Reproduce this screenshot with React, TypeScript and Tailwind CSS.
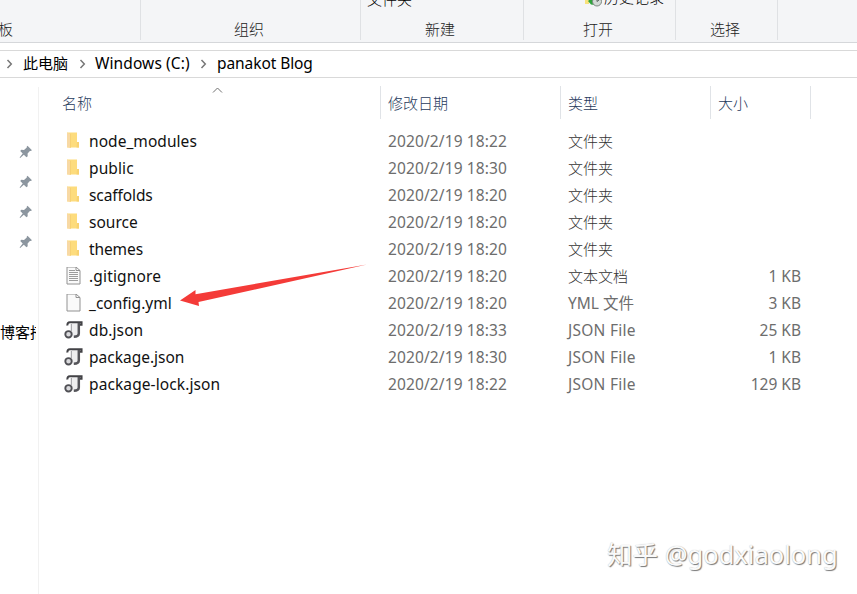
import React from 'react'

type FileKind = 'folder' | 'text' | 'blank' | 'script'

type Entry = {
    name: string
    kind: FileKind
    date: string
    type: string
    size?: string
    // letter-spacing class for labels that need a nudge
    tracking?: string
}

const ENTRIES: Entry[] = [
    { name: 'node_modules', kind: 'folder', date: '2020/2/19 18:22', type: '文件夹', tracking: 'tracking-[0.05px]' },
    { name: 'public', kind: 'folder', date: '2020/2/19 18:30', type: '文件夹', tracking: 'tracking-[0.1px]' },
    { name: 'scaffolds', kind: 'folder', date: '2020/2/19 18:20', type: '文件夹', tracking: 'tracking-[-0.1px]' },
    { name: 'source', kind: 'folder', date: '2020/2/19 18:20', type: '文件夹' },
    { name: 'themes', kind: 'folder', date: '2020/2/19 18:20', type: '文件夹', tracking: 'tracking-[-0.1px]' },
    { name: '.gitignore', kind: 'text', date: '2020/2/19 18:20', type: '文本文档', size: '1 KB', tracking: 'tracking-[0.15px]' },
    { name: '_config.yml', kind: 'blank', date: '2020/2/19 18:20', type: 'YML 文件', size: '3 KB' },
    { name: 'db.json', kind: 'script', date: '2020/2/19 18:33', type: 'JSON File', size: '25 KB', tracking: 'tracking-[0.1px]' },
    { name: 'package.json', kind: 'script', date: '2020/2/19 18:30', type: 'JSON File', size: '1 KB' },
    { name: 'package-lock.json', kind: 'script', date: '2020/2/19 18:22', type: 'JSON File', size: '129 KB', tracking: 'tracking-[0.1px]' },
]

// Column text: plain Chinese labels are set lighter than Latin ones
function typeClass(type: string) {
    if (type.startsWith('JSON')) return 'tracking-[0.25px]'
    if (type.startsWith('YML')) return ''
    return 'text-[15px] font-light text-[#333]'
}

function FileIcon({ kind }: { kind: FileKind }) {
    if (kind === 'folder') {
        return (
            <svg className="w-5 h-5" viewBox="0 0 20 20">
                <path d="M3 .5h10V10h2v5.500H3z" fill="#fddc7d" />
                <path d="M3 .5l3 1.500v14L3 15z" fill="#f8d9a4" />
                <path d="M6 2l1-.5v14l-1 .5z" fill="#f7d173" />
                <path d="M13 10h2v5.500h-2.500z" fill="#f8d271" />
            </svg>
        )
    }
    if (kind === 'script') {
        return (
            <svg className="w-5 h-5" viewBox="0 0 20 20" fill="none">
                <path d="M7.500 2h7.500v10.500q0 3-3 3.300H8z" fill="#eeeeef" />
                <path d="M3.500 4.500Q3 1.300 6 1.300h11.500v2.400h-2" stroke="#424246" strokeWidth="2.100" />
                <path d="M14.800 2v10.500q0 3.200-5 3.200" stroke="#55555a" strokeWidth="2.500" />
                <path d="M7.300 3v7" stroke="#97979c" />
                <circle cx="4.500" cy="13.300" r="3.200" fill="#dadadd" stroke="#505055" strokeWidth="1.900" />
            </svg>
        )
    }
    return (
        <svg className="w-5 h-5" viewBox="0 0 20 20" fill="none">
            <path d="M3.500-.500h9L16.500 3v13.500h-13z" fill="#fafafa" stroke="#929292" transform="translate(-.5 .5)" />
            <path d="M12 0v3.500h4" stroke="#929292" />
            {kind === 'text' && (
                <path d="M5 3.500h6M5 5.500h9M5 7.500h9M5 9.500h9M5 11.500h9M5 13.500h9" stroke="#9c9c9c" />
            )}
        </svg>
    )
}

function Pin() {
    return (
        <svg className="w-[14px] h-[14px]" viewBox="0 0 14 14">
            <path d="M8.500 0.800 13 5.200l-1.400.9-.7-.1-2.300 2.600.1 2.700-1.200 1L4.800 9.700 1.200 12.900.6 12.400 3.700 8.600 1.200 6l1.100-1.200 2.700.1L7.800 2.600l-.1-.9z" fill="#8c969f" />
        </svg>
    )
}

function Crumb() {
    return (
        <svg className="w-[7px] h-[10px] shrink-0" viewBox="0 0 7 10" fill="none">
            <path d="M1.500 1l3.800 4-3.800 4" stroke="#777" strokeWidth="1.500" />
        </svg>
    )
}

function HistoryIcon() {
    return (
        <svg className="w-[17px] h-[17px]" viewBox="0 0 17 17">
            <path d="M0 0h4v14H0z" fill="#f8e27c" />
            <path d="M3 11l5-4 2 8-4-.5z" fill="#2fa43c" />
            <circle cx="12" cy="11.500" r="4.500" fill="#d3dad6" stroke="#7d8883" />
            <path d="M12 8.500v3l2-1.500" stroke="#59645f" fill="none" />
        </svg>
    )
}

function RibbonGroup({ label, width, children }: { label: string; width: string; children?: React.ReactNode }) {
    return (
        <div className={`${width} relative h-[40px] shrink-0 border-r border-[#dfe1e4] pt-[18px] text-center leading-[22px]`}>
            {children}
            {label}
        </div>
    )
}

function HeaderCell({ label, width }: { label: string; width: string }) {
    return (
        <div className={`${width} h-[33px] shrink-0 border-r border-[#e0e3e7] leading-[35px]`}>{label}</div>
    )
}

export default function App() {
    return (
        <div className="relative flex h-[594px] w-[857px] flex-col overflow-hidden bg-white font-['Noto_Sans','Noto_Sans_CJK_SC',sans-serif] text-[15px] text-black">
            {/* Ribbon */}
            <div className="flex h-[43px] shrink-0 overflow-hidden border-b border-[#d5d7da] bg-[#f4f5f7] font-light text-[#222]">
                <div className="h-[40px] w-[141px] shrink-0 border-r border-[#dfe1e4] pt-[18px] leading-[22px]">
                    <span className="-ml-[2px]">板</span>
                </div>
                <RibbonGroup label="组织" width="w-[220px] pr-[3px]" />
                <RibbonGroup label="新建" width="w-[163px] pr-[4px]">
                    <span className="absolute left-[6px] -top-[12px] text-black">文件夹</span>
                </RibbonGroup>
                <RibbonGroup label="打开" width="w-[152px] pr-[3px]">
                    <span className="absolute left-[61px] -top-[10px]"><HistoryIcon /></span>
                    <span className="absolute left-[80px] -top-[14px] text-black">历史记录</span>
                </RibbonGroup>
                <RibbonGroup label="选择" width="w-[102px] pr-[3px]" />
            </div>

            {/* Address bar */}
            <div className="mt-[7px] flex h-[28px] shrink-0 items-center border-y border-[#d9d9d9] pb-px pl-[6px]">
                <Crumb />
                <span className="ml-[10px] w-[46px]">此电脑</span>
                <span className="ml-[10px] flex"><Crumb /></span>
                <span className="ml-[9px] w-[96px] whitespace-nowrap text-[15.500px] tracking-[0.100px]">Windows (C:)</span>
                <span className="ml-[9px] flex"><Crumb /></span>
                <span className="ml-[10px] whitespace-nowrap text-[15.500px] tracking-[-0.080px]">panakot Blog</span>
            </div>

            <div className="flex min-h-0 flex-1">
                {/* Navigation pane */}
                <div className="mt-[9px] w-[39px] shrink-0 overflow-hidden border-r border-[#f1f1f1] pt-[50px]">
                    <div className="flex flex-col items-end pr-[5px]">
                        {[0, 1, 2, 3].map((i) => (
                            <div key={i} className="flex h-[30px] items-center"><Pin /></div>
                        ))}
                    </div>
                    <div className="mt-[63px] w-[36px] overflow-hidden whitespace-nowrap leading-[24px]">博客搭建</div>
                </div>

                {/* File list */}
                <div className="flex-1 pt-[8px]">
                    <div className="relative flex font-light text-[#1f3a5c]">
                        <HeaderCell label="名称" width="w-[342px] pl-[23px]" />
                        <HeaderCell label="修改日期" width="w-[180px] pl-[7px]" />
                        <HeaderCell label="类型" width="w-[150px] pl-[7px]" />
                        <HeaderCell label="大小" width="w-[100px] pl-[7px]" />
                        <svg className="absolute left-[173px] top-[1px] h-[6px] w-[11px]" viewBox="0 0 11 6" fill="none">
                            <path d="M1 5.500 5.500 1 10 5.500" stroke="#707070" />
                        </svg>
                    </div>
                    <div className="pt-[9px] text-[15.500px] text-[#6d6d6d]">
                        {ENTRIES.map((entry) => (
                            <div key={entry.name} className="flex h-[27px] items-center whitespace-nowrap">
                                <span className="ml-[25px] w-[25px] shrink-0"><FileIcon kind={entry.kind} /></span>
                                <span className={`${entry.tracking ?? ''} w-[299px] text-[#111]`}>{entry.name}</span>
                                <span className="w-[180px] tracking-[0.120px]">{entry.date}</span>
                                <span className={`w-[140px] ${typeClass(entry.type)}`}>{entry.type}</span>
                                <span className="w-[93px] text-right">{entry.size}</span>
                            </div>
                        ))}
                    </div>
                </div>
            </div>

            {/* Annotation arrow */}
            <svg className="absolute left-[178px] top-[260px] h-[50px] w-[192px]" viewBox="0 0 192 50">
                <path d="M2 40.500 17.500 30v4.200L189 4.500 20.500 42l.5 4z" fill="#f43b38" />
            </svg>

            {/* Watermark */}
            <div className="absolute left-[607px] top-[536px] whitespace-nowrap text-[25.500px] leading-[36px] text-[#fafafa] [text-shadow:1px_1px_1px_#777,0_0_1px_#bbb]">
                知乎 @godxiaolong
            </div>
        </div>
    )
}
